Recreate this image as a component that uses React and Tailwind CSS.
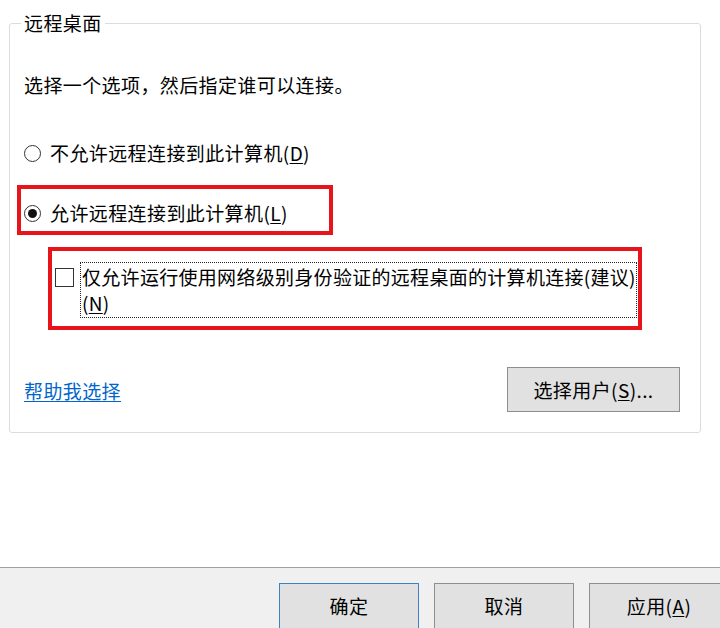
const font = { fontFamily: '"Microsoft YaHei", "Noto Sans CJK SC", sans-serif' };

// Underlined access key inside a label, e.g. (D)
const Key = ({ children }) => <span className="underline underline-offset-2">{children}</span>;

const Radio = ({ checked }) => (
  <span className="w-[17px] h-[17px] shrink-0 rounded-full border border-[#333] bg-white flex items-center justify-center">
    {checked && <span className="w-[9px] h-[9px] rounded-full bg-[#111]" />}
  </span>
);

const DialogButton = ({ children, primary }) => (
  <button
    className={`w-[140px] h-[50px] shrink-0 pt-[9px] flex justify-center items-start bg-[#e1e1e1] text-[19px] leading-[26px] text-black border ${
      primary ? 'border-[#3c82c4]' : 'border-[#8e8e8e]'
    }`}
  >
    {children}
  </button>
);

export default function App() {
  return (
    <div className="w-[720px] h-[628px] bg-white flex flex-col overflow-hidden text-black tracking-[0.4px]" style={font}>
      <div className="flex-1 pt-[10px]">
        <fieldset className="ml-[9px] mr-[19px] border border-[#d6dee4] rounded-[3px] pl-[14px] pr-[20px] pb-[20px]">
          <legend className="-ml-[3px] px-[3px] text-[19px] leading-[26px]">远程桌面</legend>

          <p className="mt-[36px] text-[19px] leading-[26px]">选择一个选项，然后指定谁可以连接。</p>

          <div className="mt-[42px] flex items-center gap-[9px] h-[26px] text-[19px] leading-[26px]">
            <Radio />
            <span>不允许远程连接到此计算机(<Key>D</Key>)</span>
          </div>

          <div className="relative mt-[34px] flex items-center gap-[9px] h-[26px] text-[19px] leading-[26px]">
            <Radio checked />
            <span>允许远程连接到此计算机(<Key>L</Key>)</span>
            <span className="absolute -left-[7px] -top-[15px] w-[316px] h-[50px] border-4 border-[#e8141b] pointer-events-none" />
          </div>

          <div className="relative mt-[36px] ml-[31px] flex items-start">
            <span className="mt-[6px] w-[19px] h-[19px] shrink-0 border border-[#333] bg-white" />
            <div className="ml-[6px] w-[557px] border border-dotted border-[#222] px-[1px] py-[1px] text-[19px] leading-[26px] tracking-[0.3px]">
              <div className="whitespace-nowrap">仅允许运行使用网络级别身份验证的远程桌面的计算机连接(建议)</div>
              <div>(<Key>N</Key>)</div>
            </div>
            <span className="absolute -left-[7px] -top-[15px] w-[594px] h-[83px] border-4 border-[#e8141b] pointer-events-none" />
          </div>

          <div className="mt-[49px] flex items-center justify-between">
            <a href="#" className="text-[19px] leading-[26px] text-[#0066cc] underline underline-offset-2 mt-[3px]">
              帮助我选择
            </a>
            <button className="w-[173px] h-[45px] bg-[#e1e1e1] border border-[#8e8e8e] text-[19px] leading-[26px] flex items-center justify-center">
              选择用户(<Key>S</Key>)...
            </button>
          </div>
        </fieldset>
      </div>

      <div className="h-[61px] shrink-0 bg-[#f0f0f0] border-t border-[#9ba1a7] pt-[15px] pl-[279px] flex gap-[15px]">
        <DialogButton primary>确定</DialogButton>
        <DialogButton>取消</DialogButton>
        <DialogButton>应用(<Key>A</Key>)</DialogButton>
      </div>
    </div>
  );
}
